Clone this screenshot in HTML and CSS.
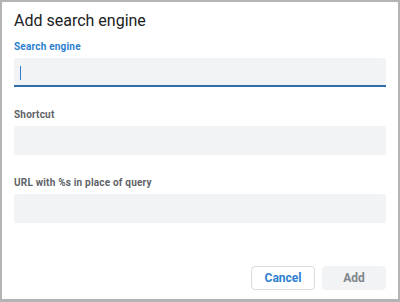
FILE: index.html
```html
<!DOCTYPE html>
<html>
<head>
<meta charset="utf-8">
<link rel="stylesheet" href="styles.css">
</head>
<body>
<div class="dialog">
  <h1 class="title">Add search engine</h1>
  <div class="field">
    <label class="label label-active">Search engine</label>
    <div class="input input-active"><span class="caret"></span></div>
  </div>
  <div class="field">
    <label class="label">Shortcut</label>
    <div class="input"></div>
  </div>
  <div class="field">
    <label class="label">URL with %s in place of query</label>
    <div class="input"></div>
  </div>
  <div class="actions">
    <button class="btn btn-cancel">Cancel</button>
    <button class="btn btn-add">Add</button>
  </div>
</div>
</body>
</html>
```
FILE: styles.css
```css
html, body {
  margin: 0;
  padding: 0;
  background: #ffffff;
}
body {
  font-family: Roboto, "Liberation Sans", sans-serif;
}
.dialog {
  box-sizing: border-box;
  width: 400px;
  height: 302px;
  border: 2px solid #b4b4b4;
  border-bottom-width: 3px;
  padding: 9px 12px 0 12px;
  display: flex;
  flex-direction: column;
}
.title {
  margin: 0;
  font-size: 16px;
  line-height: 20px;
  font-weight: 400;
  color: #202124;
}
.field {
  display: flex;
  flex-direction: column;
  margin-top: 10px;
}
.field + .field {
  margin-top: 22px;
}
.label {
  font-size: 10px;
  line-height: 12px;
  font-weight: 700;
  letter-spacing: 0.2px;
  color: #5f6368;
  margin-bottom: 5px;
}
.label-active {
  color: #2f7fd0;
}
.input {
  box-sizing: border-box;
  height: 29px;
  background: #f1f3f4;
  border-radius: 3px 3px 0 0;
  display: flex;
  align-items: center;
  padding-left: 6px;
}
.input-active {
  border-bottom: 2px solid #2f6fad;
}
.caret {
  display: block;
  width: 1px;
  height: 14px;
  background: #2f7fd0;
  margin-top: 2px;
}
.actions {
  display: flex;
  justify-content: flex-end;
  gap: 7px;
  margin-top: 43px;
}
.btn {
  box-sizing: border-box;
  width: 64px;
  height: 24px;
  border-radius: 4px;
  font-family: Roboto, "Liberation Sans", sans-serif;
  font-size: 12px;
  font-weight: 700;
  padding: 0;
}
.btn-cancel {
  background: #ffffff;
  border: 1px solid #dadce0;
  color: #2f7fd0;
}
.btn-add {
  background: #f1f3f4;
  border: 1px solid #f1f3f4;
  color: #80868b;
}
```
